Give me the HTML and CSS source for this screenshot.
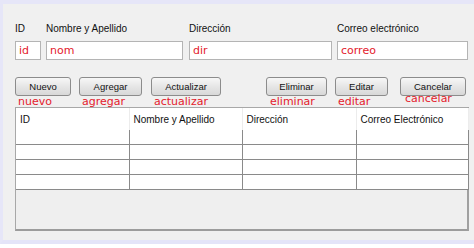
FILE: index.html
```html
<!DOCTYPE html>
<html lang="es">
<head>
  <meta charset="UTF-8">
  <title>Clientes</title>
  <link rel="stylesheet" href="styles.css">
</head>
<body>

  <div class="window">
    <div class="fields">
      <div class="field field-id">
        <label for="id">ID</label>
        <input type="text" id="id" value="id">
      </div>
      <div class="field field-nom">
        <label for="nom">Nombre y Apellido</label>
        <input type="text" id="nom" value="nom">
      </div>
      <div class="field field-dir">
        <label for="dir">Dirección</label>
        <input type="text" id="dir" value="dir">
      </div>
      <div class="field field-correo">
        <label for="correo">Correo electrónico</label>
        <input type="text" id="correo" value="correo">
      </div>
    </div>

    <div class="actions">
      <div class="action act-nuevo">
        <button>Nuevo</button>
        <span class="tag">nuevo</span>
      </div>
      <div class="action act-agregar">
        <button>Agregar</button>
        <span class="tag">agregar</span>
      </div>
      <div class="action act-actualizar">
        <button>Actualizar</button>
        <span class="tag">actualizar</span>
      </div>
      <div class="action act-eliminar">
        <button>Eliminar</button>
        <span class="tag">eliminar</span>
      </div>
      <div class="action act-editar">
        <button>Editar</button>
        <span class="tag">editar</span>
      </div>
      <div class="action act-cancelar">
        <button>Cancelar</button>
        <span class="tag tag-up">cancelar</span>
      </div>
    </div>

    <div class="grid">
      <table>
        <colgroup>
          <col class="c1"><col class="c2"><col class="c3"><col class="c4">
        </colgroup>
        <thead>
          <tr>
            <th>ID</th>
            <th>Nombre y Apellido</th>
            <th>Dirección</th>
            <th>Correo Electrónico</th>
          </tr>
        </thead>
        <tbody>
          <tr><td></td><td></td><td></td><td></td></tr>
          <tr><td></td><td></td><td></td><td></td></tr>
          <tr><td></td><td></td><td></td><td></td></tr>
          <tr><td></td><td></td><td></td><td></td></tr>
        </tbody>
      </table>
    </div>
  </div>

</body>
</html>
```

FILE: styles.css
```css
body {
  margin: 0;
  background: white;
  font-family: "Liberation Sans", Arial, sans-serif;
  font-size: 10px;
  color: #111;
}
.window {
  box-sizing: border-box;
  height: 244px;
  background: #f0f0f0;
  border-top: 4px solid #e6e6f8;
  border-left: 3px solid #e6e6f8;
  border-bottom: 4px solid #e4e4f8;
  padding: 19px 6px 0 12px;
}
.fields {
  display: flex;
  gap: 5px;
}
.field {
  display: flex;
  flex-direction: column;
}
.field label {
  height: 12px;
  line-height: 12px;
  margin-bottom: 6px;
}
.field input {
  box-sizing: border-box;
  height: 19px;
  margin: 0;
  padding: 0 3px;
  border: 1px solid #b4b4b4;
  background: white;
  font-family: "DejaVu Sans", Verdana, sans-serif;
  font-size: 11px;
  color: #e4202c;
  outline: none;
}
.field-id { width: 26px; }
.field-nom { width: 137px; }
.field-dir { width: 143px; margin-left: 1px; }
.field-correo { width: 131px; }

.actions {
  display: flex;
  margin-top: 17px;
  height: 30px;
}
.action {
  display: flex;
  flex-direction: column;
}
.action button {
  box-sizing: border-box;
  height: 19px;
  margin: 0;
  padding: 0;
  border: 1px solid #8c8c8c;
  border-radius: 3px;
  background: linear-gradient(#f7f7f7, #e6e6e6 50%, #d8d8d8);
  font-family: "Liberation Sans", Arial, sans-serif;
  font-size: 9.5px;
  color: #111;
}
.tag {
  padding-left: 3px;
  height: 11px;
  line-height: 11px;
  font-family: "DejaVu Sans", Verdana, sans-serif;
  font-size: 11px;
  color: #e4202c;
  white-space: nowrap;
}
.tag-up {
  margin-top: -3px;
  padding-left: 5px;
}
.act-nuevo { width: 56px; }
.act-agregar { width: 63px; margin-left: 8px; }
.act-actualizar { width: 70px; margin-left: 9px; }
.act-eliminar { width: 61px; margin-left: 45px; }
.act-editar { width: 53px; margin-left: 8px; }
.act-cancelar { width: 66px; margin-left: 12px; }
.act-eliminar .tag { padding-left: 4px; }

.grid {
  box-sizing: border-box;
  width: 454px;
  height: 124px;
  border: 1px solid #a8a8a8;
  border-right: 2px solid #a0a0a0;
  border-bottom: 2px solid #9c9c9c;
  background: #efefef;
}
table {
  border-collapse: collapse;
  table-layout: fixed;
  width: 452px;
  background: white;
}
.c1 { width: 113px; }
.c2 { width: 113px; }
.c3 { width: 114px; }
.c4 { width: 112px; }
th {
  height: 22px;
  padding: 0 0 0 4px;
  text-align: left;
  font-weight: normal;
  border-right: 1px solid #ececec;
}
td {
  height: 14px;
  padding: 0;
  border-right: 1px solid #8a8a8a;
  border-bottom: 1px solid #8a8a8a;
}
```
